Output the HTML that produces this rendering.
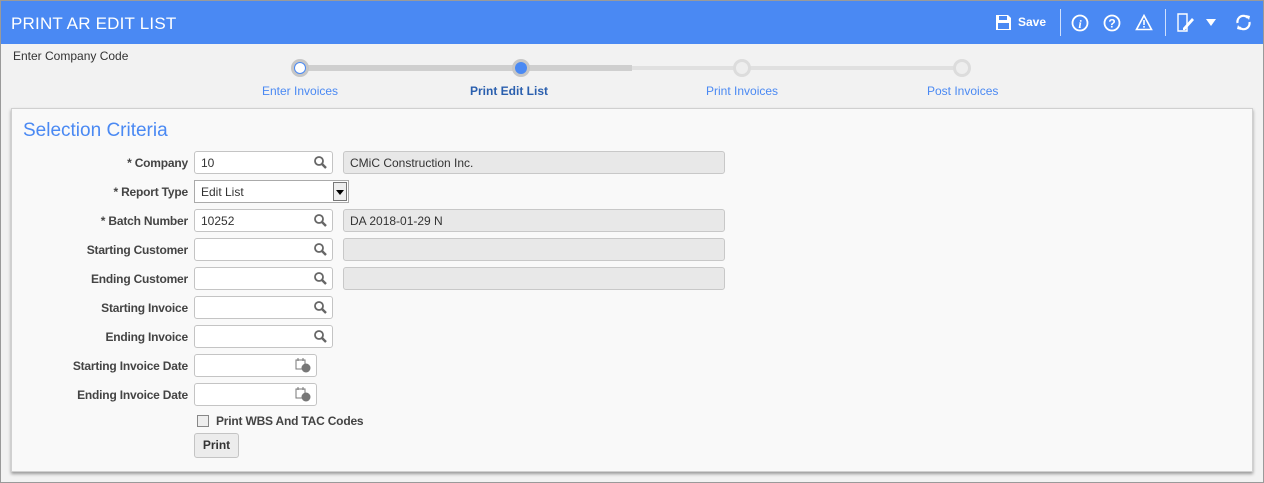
<!DOCTYPE html>
<html><head><style>
*{box-sizing:border-box;margin:0;padding:0}
body{width:1264px;height:483px;background:#f2f2f2;font-family:"Liberation Sans",Arial,sans-serif;font-size:12px;color:#333;position:relative;overflow:hidden}
.frame{position:absolute;left:0;top:0;width:1264px;height:483px;border:1px solid #9a9a9a;pointer-events:none;z-index:5}
.top{position:absolute;left:0;top:0;width:1264px;height:44px;background:#4a89f3;color:#fff}
.top .t{position:absolute;left:11px;top:14px;font-size:17px;letter-spacing:.2px}
.abs{position:absolute}
.c{position:absolute;left:0;top:1px;width:1264px;height:482px}
.sep{position:absolute;top:9px;width:1px;height:27px;background:#cfe0fd}
.lbl{position:absolute;right:1076px;font-weight:bold;color:#444;font-size:12px;white-space:nowrap;letter-spacing:-0.2px}
.inp{position:absolute;left:194px;width:139px;height:23px;border:1px solid #c4c4c4;border-radius:3px;background:#fff;padding:4px 6px;font-size:12px}
.ro{position:absolute;left:343px;width:382px;height:23px;border:1px solid #c8c8c8;border-radius:3px;background:#e8e8e8;padding:4px 6px}
.mag{position:absolute;right:5px;top:4px}
.dot{position:absolute;width:18px;height:18px;border-radius:50%;background:#d6d6d6;top:58px}
.dot i{position:absolute;left:3px;top:3px;width:12px;height:12px;border-radius:50%;background:#f2f2f2}
.step{position:absolute;top:83px;font-size:12px;color:#4a89f3}
</style></head><body>
<div class="frame"></div>
<div class="top"><div class="t">PRINT AR EDIT LIST</div>
<svg class="abs" style="left:995px;top:14px" width="17" height="17" viewBox="0 0 17 17"><path d="M1 1h12l3 3v12H1z" fill="#fff"/><rect x="4" y="2" width="8" height="4" fill="#4a89f3"/><rect x="3" y="9" width="11" height="6" fill="#4a89f3"/></svg>
<div class="abs" style="left:1018px;top:15px;font-weight:bold;font-size:12px">Save</div>
<div class="sep" style="left:1060px"></div>
<svg class="abs" style="left:1071px;top:14px" width="18" height="18"><circle cx="9" cy="9" r="7.5" fill="none" stroke="#fff" stroke-width="1.8"/><text x="9" y="14" font-size="12" font-style="italic" font-weight="bold" text-anchor="middle" fill="#fff" font-family="Liberation Serif">i</text></svg>
<svg class="abs" style="left:1103px;top:14px" width="18" height="18"><circle cx="9" cy="9" r="7.5" fill="none" stroke="#fff" stroke-width="1.8"/><text x="9" y="13.5" font-size="12" font-weight="bold" text-anchor="middle" fill="#fff">?</text></svg>
<svg class="abs" style="left:1135px;top:14px" width="18" height="17"><path d="M9 1.5L16.5 15.5H1.5z" fill="none" stroke="#fff" stroke-width="1.6"/><rect x="8.2" y="6" width="1.6" height="5" fill="#fff"/><rect x="8.2" y="12" width="1.6" height="1.6" fill="#fff"/></svg>
<div class="sep" style="left:1165px"></div>
<svg class="abs" style="left:1177px;top:13px" width="18" height="19"><path d="M1 1h9v17H1z" fill="none" stroke="#fff" stroke-width="1.4"/><path d="M6 15l9-10 2 2-9 10H6z" fill="#fff"/></svg>
<svg class="abs" style="left:1206px;top:19px" width="10" height="8"><path d="M0 0h10L5 7z" fill="#fff"/></svg>
<svg class="abs" style="left:1234px;top:13px" width="19" height="19"><path d="M3.5 10A6 6 0 0 1 14 5M15.5 9A6 6 0 0 1 5 14" fill="none" stroke="#fff" stroke-width="2.2"/><path d="M12 2l4 1-1 4zM7 17l-4-1 1-4z" fill="#fff"/></svg>
</div>
<div class="c">
<div class="abs" style="left:13px;top:48px;font-size:12px;color:#333">Enter Company Code</div>
<div class="abs" style="left:300px;top:65px;width:662px;height:4px;background:#e0e0e0"></div>
<div class="abs" style="left:300px;top:64px;width:332px;height:6px;background:#cfcfcf"></div>
<div class="dot" style="left:291px;background:#c6c6c6"><i style="background:#fff;border:1px solid #4a89f3"></i></div>
<div class="dot" style="left:512px;background:#c6c6c6"><i style="background:#4a89f3"></i></div>
<div class="dot" style="left:733px;background:#dcdcdc"><i style="background:#eee"></i></div>
<div class="dot" style="left:953px;background:#dcdcdc"><i style="background:#eee"></i></div>
<div class="step" style="left:262px">Enter Invoices</div>
<div class="step" style="left:470px;font-weight:bold;color:#2a5fae">Print Edit List</div>
<div class="step" style="left:706px">Print Invoices</div>
<div class="step" style="left:927px">Post Invoices</div>
<div class="abs" style="left:11px;top:107px;width:1242px;height:364px;background:#f9f9f9;border:1px solid #d0d0d0;box-shadow:0 2px 3px #999"></div>
<div class="abs" style="left:23px;top:119px;font-size:19px;color:#4a89f3">Selection Criteria</div>
<div class="lbl" style="top:155px">* Company</div>
<div class="inp" style="top:150px">10<svg class="mag" width="13" height="13"><circle cx="5" cy="5" r="4" fill="none" stroke="#666" stroke-width="1.8"/><path d="M8 8l4 4" stroke="#666" stroke-width="2.4"/></svg></div>
<div class="ro" style="top:150px">CMiC Construction Inc.</div>
<div class="lbl" style="top:184px">* Report Type</div>
<div class="inp" style="top:179px;width:155px;border-radius:0;border-color:#aaa">Edit List<div class="abs" style="right:1px;top:1px;width:14px;height:19px;border:1px solid #777;background:#eee"><svg style="position:absolute;left:2px;top:7px" width="8" height="5"><path d="M0 0h8L4 5z" fill="#000"/></svg></div></div>
<div class="lbl" style="top:213px">* Batch Number</div>
<div class="inp" style="top:208px">10252<svg class="mag" width="13" height="13"><circle cx="5" cy="5" r="4" fill="none" stroke="#666" stroke-width="1.8"/><path d="M8 8l4 4" stroke="#666" stroke-width="2.4"/></svg></div>
<div class="ro" style="top:208px">DA 2018-01-29 N</div>
<div class="lbl" style="top:242px">Starting Customer</div>
<div class="inp" style="top:237px"><svg class="mag" width="13" height="13"><circle cx="5" cy="5" r="4" fill="none" stroke="#666" stroke-width="1.8"/><path d="M8 8l4 4" stroke="#666" stroke-width="2.4"/></svg></div>
<div class="ro" style="top:237px"></div>
<div class="lbl" style="top:271px">Ending Customer</div>
<div class="inp" style="top:266px"><svg class="mag" width="13" height="13"><circle cx="5" cy="5" r="4" fill="none" stroke="#666" stroke-width="1.8"/><path d="M8 8l4 4" stroke="#666" stroke-width="2.4"/></svg></div>
<div class="ro" style="top:266px"></div>
<div class="lbl" style="top:300px">Starting Invoice</div>
<div class="inp" style="top:295px"><svg class="mag" width="13" height="13"><circle cx="5" cy="5" r="4" fill="none" stroke="#666" stroke-width="1.8"/><path d="M8 8l4 4" stroke="#666" stroke-width="2.4"/></svg></div>
<div class="lbl" style="top:329px">Ending Invoice</div>
<div class="inp" style="top:324px"><svg class="mag" width="13" height="13"><circle cx="5" cy="5" r="4" fill="none" stroke="#666" stroke-width="1.8"/><path d="M8 8l4 4" stroke="#666" stroke-width="2.4"/></svg></div>
<div class="lbl" style="top:358px">Starting Invoice Date</div>
<div class="inp" style="top:353px;width:123px"><svg class="mag" style="top:3px" width="16" height="15"><rect x="1" y="2" width="9" height="9" fill="none" stroke="#777"/><path d="M3 0v3M8 0v3" stroke="#777"/><circle cx="11" cy="10" r="4.5" fill="#777"/></svg></div>
<div class="lbl" style="top:387px">Ending Invoice Date</div>
<div class="inp" style="top:382px;width:123px"><svg class="mag" style="top:3px" width="16" height="15"><rect x="1" y="2" width="9" height="9" fill="none" stroke="#777"/><path d="M3 0v3M8 0v3" stroke="#777"/><circle cx="11" cy="10" r="4.5" fill="#777"/></svg></div>
<div class="abs" style="left:197px;top:414px;width:12px;height:12px;border:1px solid #888;background:#eee"></div>
<div class="abs" style="left:216px;top:413px;font-weight:bold;color:#444;letter-spacing:-0.2px">Print WBS And TAC Codes</div>
<div class="abs" style="left:194px;top:432px;width:45px;height:25px;border:1px solid #c4c4c4;border-radius:3px;background:#ececec;font-weight:bold;text-align:center;line-height:23px;color:#333">Print</div>
</div>
</body></html>
